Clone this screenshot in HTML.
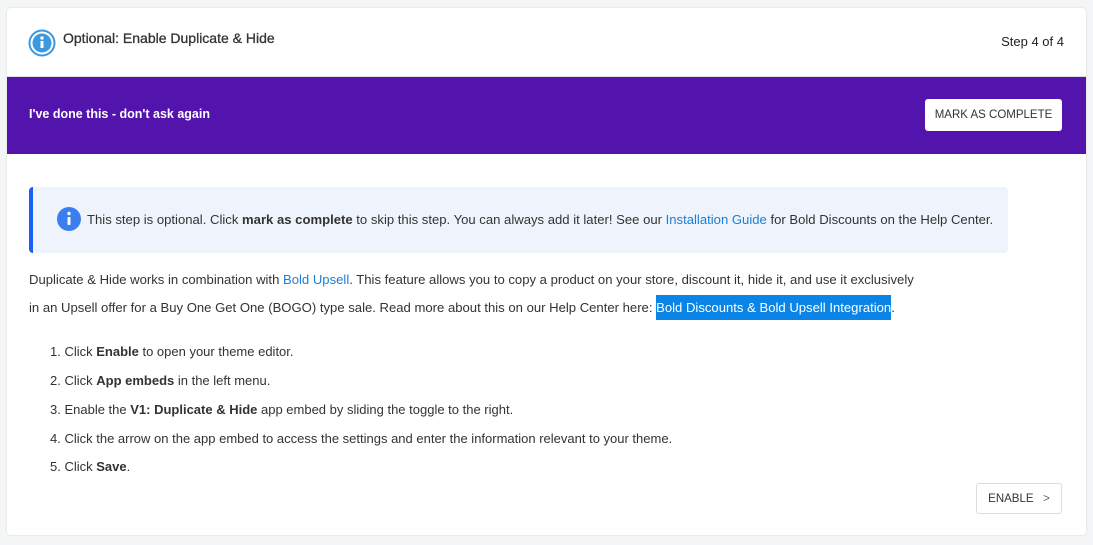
<!DOCTYPE html>
<html><head><style>
body{margin:0;background:#f4f5f6;font-family:"Liberation Sans",sans-serif;color:#222;}
.card{position:absolute;left:7px;top:8px;width:1079px;height:527px;background:#fff;border-radius:4px;box-shadow:0 0 2px rgba(0,0,0,.12);overflow:hidden}
.hdr{position:absolute;left:0;top:0;width:100%;height:68px;border-bottom:1px solid #ddd}
.ttl{position:absolute;left:56px;top:22px;font-size:14px;color:#333;-webkit-text-stroke:0.3px #333}
.step{position:absolute;right:22px;top:26px;font-size:13px}
.pur{position:absolute;left:0;top:69px;width:100%;height:77px;background:#5314ad;color:#fff}
.pur .t{position:absolute;left:22px;top:30px;font-size:12.5px;font-weight:bold}
.btn{position:absolute;background:#fff;border:1px solid #ddd;border-radius:3px;font-size:11.5px;color:#333;box-sizing:border-box;display:flex;align-items:center;justify-content:center}
.info{position:absolute;left:22px;top:179px;width:979px;height:66px;background:#eff3fb;border-left:4px solid #1a5ff5;border-radius:4px;box-sizing:border-box}
.info .tx{position:absolute;left:54px;top:25px;font-size:13.1px;color:#333;white-space:nowrap}
a{color:#1c7ed6;text-decoration:none}
.p{position:absolute;left:22px;font-size:13.1px;color:#333;white-space:nowrap}
.li{position:absolute;left:43px;font-size:13px;color:#333;white-space:nowrap}
</style></head><body>
<div class="card">
<div class="hdr">
<svg style="position:absolute;left:21px;top:21px" width="28" height="28" viewBox="0 0 28 28"><circle cx="14" cy="14" r="12.5" fill="none" stroke="#3c98e0" stroke-width="2"/><circle cx="14" cy="14" r="9.5" fill="#3c98e0"/><rect x="12.5" y="12" width="3" height="7" fill="#fff"/><circle cx="14" cy="9" r="1.7" fill="#fff"/></svg>
<div class="ttl">Optional: Enable Duplicate &amp; Hide</div>
<div class="step">Step 4 of 4</div>
</div>
<div class="pur"><div class="t">I've done this - don't ask again</div>
<div class="btn" style="left:918px;top:22px;width:137px;height:32px;border:none">MARK AS COMPLETE</div></div>
<div class="info">
<svg style="position:absolute;left:24px;top:20px" width="24" height="24" viewBox="0 0 24 24"><circle cx="12" cy="12" r="12" fill="#3a7ef0"/><rect x="10.5" y="10" width="3" height="8" rx="1" fill="#fff"/><circle cx="12" cy="6.5" r="1.7" fill="#fff"/></svg>
<div class="tx">This step is optional. Click <b>mark as complete</b> to skip this step. You can always add it later! See our <a>Installation Guide</a> for Bold Discounts on the Help Center.</div>
</div>
<div class="p" style="top:264px">Duplicate &amp; Hide works in combination with <a>Bold Upsell</a>. This feature allows you to copy a product on your store, discount it, hide it, and use it exclusively</div>
<div class="p" style="top:292px">in an Upsell offer for a Buy One Get One (BOGO) type sale. Read more about this on our Help Center here: <span style="background:#0a84e6;color:#fff;padding:5px 0">Bold Discounts &amp; Bold Upsell Integration</span>.</div>
<div class="li" style="top:336px">1. Click <b>Enable</b> to open your theme editor.</div>
<div class="li" style="top:365px">2. Click <b>App embeds</b> in the left menu.</div>
<div class="li" style="top:394px">3. Enable the <b>V1: Duplicate &amp; Hide</b> app embed by sliding the toggle to the right.</div>
<div class="li" style="top:423px">4. Click the arrow on the app embed to access the settings and enter the information relevant to your theme.</div>
<div class="li" style="top:451px">5. Click <b>Save</b>.</div>
<div class="btn" style="left:969px;top:475px;width:86px;height:31px">ENABLE &nbsp;&nbsp;<span style="color:#666">&gt;</span></div>
</div>
</body></html>
